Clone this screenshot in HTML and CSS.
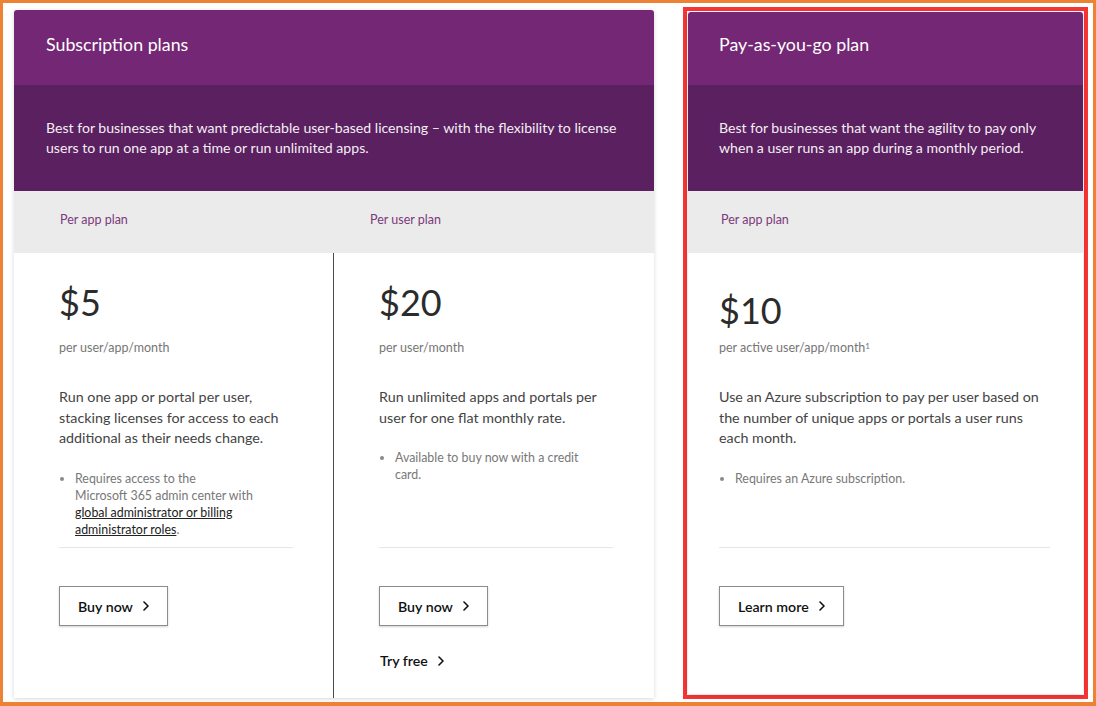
FILE: index.html
```html
<!DOCTYPE html>
<html lang="en">
<head>
<meta charset="utf-8">
<title>Power Apps pricing</title>
<link rel="stylesheet" href="styles.css">
</head>
<body>
<div class="frame">
  <section class="card card-sub">
    <header class="card-title">Subscription plans</header>
    <div class="card-desc">Best for businesses that want predictable user-based licensing – with the flexibility to license<br>users to run one app at a time or run unlimited apps.</div>
    <div class="labels labels-two">
      <span class="label label-a">Per app plan</span>
      <span class="label label-b">Per user plan</span>
    </div>
    <div class="cols">
      <div class="plan plan-a">
        <div class="plan-top">
          <div class="price">$5</div>
          <div class="unit">per user/app/month</div>
          <p class="summary">Run one app or portal per user,<br>stacking licenses for access to each<br>additional as their needs change.</p>
          <ul class="notes">
            <li>Requires access to the<br>Microsoft 365 admin center with<br><a href="#">global administrator or billing<br>administrator roles</a>.</li>
          </ul>
        </div>
        <hr class="sep">
        <a class="btn" href="#">Buy now <svg class="chev" viewBox="0 0 6 10" width="6" height="10"><polyline points="1,1 5,5 1,9"/></svg></a>
      </div>
      <div class="plan plan-b">
        <div class="plan-top">
          <div class="price">$20</div>
          <div class="unit">per user/month</div>
          <p class="summary">Run unlimited apps and portals per<br>user for one flat monthly rate.</p>
          <ul class="notes">
            <li>Available to buy now with a credit<br>card.</li>
          </ul>
        </div>
        <hr class="sep">
        <a class="btn" href="#">Buy now <svg class="chev" viewBox="0 0 6 10" width="6" height="10"><polyline points="1,1 5,5 1,9"/></svg></a>
        <a class="link" href="#">Try free <svg class="chev" viewBox="0 0 6 10" width="6" height="10"><polyline points="1,1 5,5 1,9"/></svg></a>
      </div>
    </div>
  </section>

  <div class="highlight">
    <section class="card card-payg">
      <header class="card-title">Pay-as-you-go plan</header>
      <div class="card-desc">Best for businesses that want the agility to pay only<br>when a user runs an app during a monthly period.</div>
      <div class="labels">
        <span class="label label-c">Per app plan</span>
      </div>
      <div class="plan plan-c">
        <div class="plan-top">
          <div class="price">$10</div>
          <div class="unit">per active user/app/month<sup>1</sup></div>
          <p class="summary">Use an Azure subscription to pay per user based on<br>the number of unique apps or portals a user runs<br>each month.</p>
          <ul class="notes">
            <li>Requires an Azure subscription.</li>
          </ul>
        </div>
        <hr class="sep">
        <a class="btn" href="#">Learn more <svg class="chev" viewBox="0 0 6 10" width="6" height="10"><polyline points="1,1 5,5 1,9"/></svg></a>
      </div>
    </section>
  </div>
</div>
</body>
</html>
```

FILE: styles.css
```css
* { box-sizing: border-box; }
html, body { margin: 0; padding: 0; background: #fff; }
body {
  font-family: "Segoe UI", Lato, "Open Sans", sans-serif;
  color: #3b3b3b;
}
.frame {
  width: 1096px;
  height: 706px;
  border: 3px solid #ee8234;
  border-bottom-width: 4px;
  display: flex;
  align-items: flex-start;
  overflow: hidden;
}
.card {
  background: #fff;
  border-radius: 3px 3px 0 0;
  box-shadow: 0 1px 4px rgba(0,0,0,0.16);
  display: flex;
  flex-direction: column;
  overflow: hidden;
}
.card-sub {
  width: 640px;
  height: 688px;
  margin: 7px 0 0 11px;
}
.highlight {
  margin: 4px 0 0 29px;
  width: 405px;
  height: 692px;
  border: 4px solid #f73434;
  padding: 1px;
}
.card-payg {
  width: 395px;
  height: 682px;
}
.card-title {
  background: #742774;
  color: #fff;
  font-size: 17.8px;
  line-height: 24px;
  height: 75px;
  padding: 22px 0 0 32px;
}
.card-payg .card-title {
  height: 73px;
  padding: 20px 0 0 31px;
}
.card-desc {
  background: #5a2060;
  color: #f4eef4;
  font-size: 14.1px;
  line-height: 20px;
  height: 106px;
  padding: 33px 0 0 32px;
  white-space: nowrap;
}
.card-payg .card-desc { padding-left: 31px; }
.labels {
  background: #ebebeb;
  height: 62px;
  display: grid;
  grid-template-columns: 1fr;
  padding-top: 21px;
}
.labels-two { grid-template-columns: 320px 320px; }
.label {
  color: #7b3a7b;
  font-size: 12.5px;
  line-height: 16px;
}
.label-a { padding-left: 46px; }
.label-b { padding-left: 36px; }
.label-c { padding-left: 33px; }
.cols {
  flex: 1;
  display: grid;
  grid-template-columns: 319px 321px;
}
.plan {
  display: flex;
  flex-direction: column;
  align-items: flex-start;
}
.plan-a { padding: 0 40px 0 45px; }
.plan-b { padding: 0 41px 0 45px; border-left: 1px solid #4a4a4a; }
.plan-c { padding: 0 33px 0 31px; }
.plan-top {
  height: 294px;
  padding-top: 27px;
  width: 100%;
}
.plan-c .plan-top { padding-top: 35px; }
.price {
  font-size: 36px;
  line-height: 44px;
  color: #2b2b2b;
}
.unit {
  margin-top: 16px;
  font-size: 12.5px;
  line-height: 16px;
  color: #767676;
}
.plan-c .unit { margin-top: 8px; }
.unit sup { font-size: 8px; vertical-align: top; line-height: 12px; }
.summary {
  margin: 31px 0 0;
  font-size: 14.3px;
  line-height: 20.5px;
  color: #444;
  white-space: nowrap;
}
.notes {
  margin: 21px 0 0;
  padding-left: 16px;
  font-size: 12.4px;
  line-height: 17px;
  color: #787878;
  white-space: nowrap;
}
.notes li::marker { color: #8a8a8a; }
.notes a { color: #222; text-decoration: underline; }
.sep {
  width: 100%;
  margin: 0;
  border: 0;
  height: 1px;
  background: #e6e6e6;
}
.btn {
  margin-top: 38px;
  height: 40px;
  display: inline-flex;
  align-items: center;
  gap: 10px;
  padding: 0 18px;
  border: 1px solid #8c8c8c;
  box-shadow: 0 1px 2px rgba(0,0,0,0.18);
  color: #111;
  font-size: 14.2px;
  font-weight: 600;
  text-decoration: none;
  background: #fff;
}
.link {
  margin-top: 25px;
  display: inline-flex;
  align-items: center;
  gap: 10px;
  padding-left: 1px;
  line-height: 20px;
  font-size: 14.2px;
  font-weight: 600;
  color: #111;
  text-decoration: none;
}
.chev {
  fill: none;
  stroke: #111;
  stroke-width: 1.6;
  stroke-linecap: round;
  stroke-linejoin: round;
}
```
